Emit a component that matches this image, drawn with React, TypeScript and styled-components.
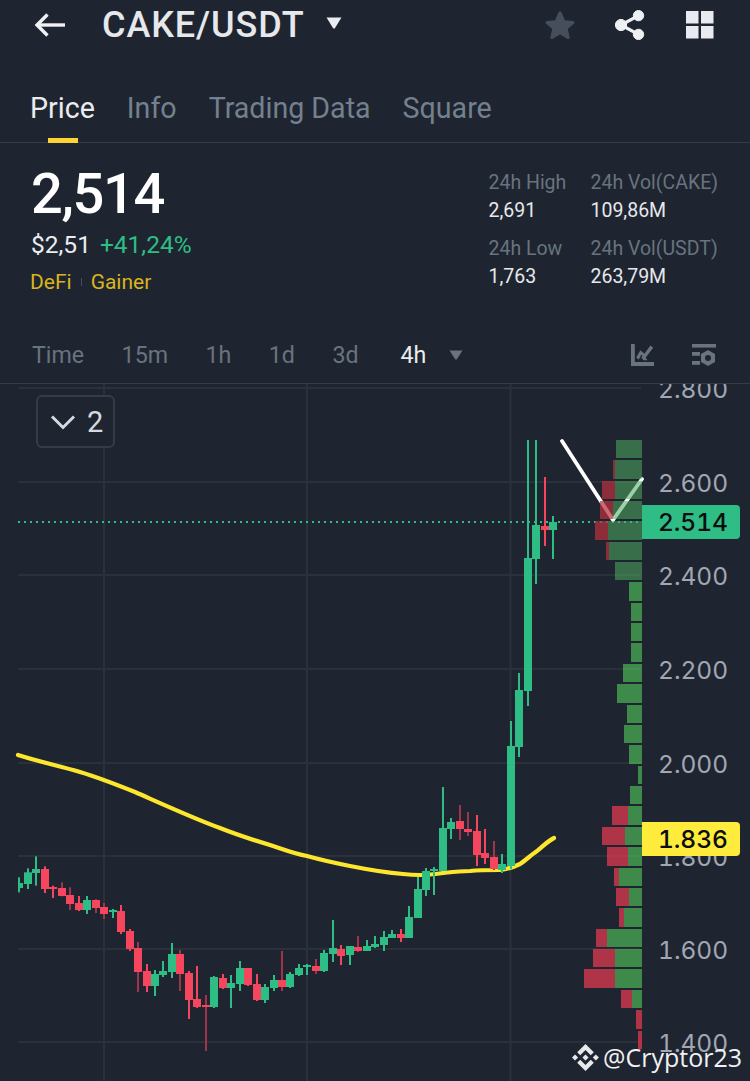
import React from "react"
import styled, { createGlobalStyle } from "styled-components"

const GREEN = "#2ebd85"
const RED = "#f6465d"
const UI_FONT = `Roboto, "Liberation Sans", sans-serif`

type Candle = [number, number, number, number, number, "g" | "r", boolean?]

// measured as [x, wickTop, wickBottom, bodyTop, bodyBottom] at 3x from the left of the chart
const leftCandles: Candle[] = [
  [57, 115, 160, 132, 147, "g"],
  [84, 88, 150, 100, 135, "g"],
  [108, 52, 140, 90, 102, "g"],
  [135, 82, 162, 90, 150, "r"],
  [159, 140, 177, 144, 150, "r"],
  [186, 130, 172, 147, 171, "r", true],
  [210, 145, 213, 168, 195, "r", true],
  [237, 171, 216, 192, 213, "r"],
  [261, 171, 225, 183, 213, "g"],
  [288, 180, 222, 183, 207, "r", true],
  [312, 192, 240, 204, 225, "r", true],
  [339, 210, 237, 213, 219, "g"],
  [363, 198, 285, 216, 279, "r"],
  [390, 270, 336, 276, 330, "r"],
  [414, 309, 459, 327, 399, "r", true],
  [441, 375, 459, 396, 441, "r"],
  [465, 393, 471, 405, 441, "g"],
  [489, 366, 414, 396, 408, "g"],
  [516, 312, 417, 345, 399, "g"],
  [540, 333, 456, 345, 405, "r", true],
  [567, 396, 540, 402, 483, "r"],
  [591, 381, 507, 480, 504, "r"],
  [618, 468, 636, 498, 504, "r", true],
  [642, 411, 507, 414, 504, "g"],
  [669, 405, 450, 417, 447, "r"],
  [693, 408, 507, 432, 447, "g"],
  [720, 366, 456, 387, 435, "g"],
  [744, 387, 441, 387, 438, "r"],
  [771, 405, 486, 435, 483, "r"],
  [795, 435, 492, 444, 483, "g"],
]

const middleCandles: Candle[] = [
  [12, 618, 666, 633, 657, "g"],
  [36, 546, 666, 633, 654, "r", true],
  [60, 609, 657, 615, 654, "g"],
  [87, 585, 621, 597, 618, "g"],
  [111, 585, 618, 588, 594, "g"],
  [138, 570, 615, 591, 606, "r", true],
  [162, 543, 609, 552, 606, "g"],
  [189, 453, 579, 537, 555, "g"],
  [213, 528, 588, 540, 561, "r"],
  [240, 531, 588, 531, 558, "g"],
  [264, 501, 549, 534, 546, "r", true],
  [291, 513, 546, 531, 546, "g"],
  [315, 501, 537, 525, 534, "g"],
  [342, 486, 546, 504, 528, "g"],
  [366, 483, 507, 495, 507, "g"],
  [393, 480, 519, 495, 507, "r"],
  [417, 411, 507, 444, 507, "g"],
  [444, 324, 447, 360, 447, "g"],
  [468, 297, 381, 306, 363, "g"],
  [492, 294, 378, 300, 306, "g"],
  [519, 54, 306, 177, 306, "g"],
  [543, 147, 210, 159, 180, "g"],
  [570, 108, 213, 156, 180, "r", true],
  [594, 129, 201, 180, 189, "r", true],
  [621, 138, 291, 186, 258, "r"],
  [645, 180, 285, 252, 267, "r"],
  [672, 216, 303, 264, 300, "r", true],
  [696, 255, 312, 285, 303, "g"],
]

const rightCandles: Candle[] = [
  [511, 722, 870, 747, 867, "g"],
  [519, 674, 758, 691, 748, "g"],
  [528, 441, 707, 559, 692, "g"],
  [536, 441, 585, 526, 560, "g"],
  [545, 478, 547, 527, 531, "r"],
  [553, 517, 560, 523, 531, "g"],
]

const candles: Candle[] = [
  ...leftCandles.map(([x, a, b, c, d, k, dim]): Candle => [
    x / 3,
    840 + a / 3,
    840 + b / 3,
    840 + c / 3,
    840 + d / 3,
    k,
    dim,
  ]),
  ...middleCandles.map(([x, a, b, c, d, k, dim]): Candle => [
    270 + x / 3,
    770 + a / 3,
    770 + b / 3,
    770 + c / 3,
    770 + d / 3,
    k,
    dim,
  ]),
  ...rightCandles,
]

// [top, height, greenLeft, redLeft]
const profile: [number, number, number, number?][] = [
  [441, 18, 616],
  [461, 19, 615, 613],
  [482, 18, 615, 602],
  [502, 18, 613, 600],
  [522, 19, 608, 595],
  [543, 18, 609, 606],
  [563, 18, 615],
  [583, 19, 629],
  [604, 18, 631],
  [624, 18, 631],
  [644, 19, 631],
  [665, 18, 623],
  [685, 19, 617],
  [706, 18, 627],
  [726, 18, 624],
  [746, 19, 629],
  [767, 18, 638],
  [787, 18, 630],
  [807, 19, 628, 612],
  [828, 18, 625, 602],
  [848, 19, 628, 607],
  [869, 18, 619, 614],
  [889, 18, 629, 616],
  [909, 19, 624, 619],
  [930, 18, 607, 596],
  [950, 18, 615, 593],
  [970, 19, 615, 584],
  [991, 18, 632, 621],
  [1011, 19, 642, 636],
  [1032, 18, 642, 638],
]

const gridRows = [389, 483, 576, 670, 764, 857, 950, 1043]
const gridColumns = [104, 307, 510.5]
const axisLabels = ["2.800", "2.600", "2.400", "2.200", "2.000", "1.800", "1.600", "1.400"]
const intervals = ["15m", "1h", "1d", "3d"]

const GlobalStyle = createGlobalStyle`
  html, body {
    margin: 0;
    background: #1e2530;
  }
`

const Page = styled.div`
  width: 750px;
  height: 1081px;
  overflow: hidden;
  background: #1e2530;
  font-family: ${UI_FONT};
  color: #eaecef;
  display: flex;
  flex-direction: column;
`

const Header = styled.header`
  height: 50px;
  display: flex;
  align-items: center;
  padding: 0 36px 0 34px;
`

const Title = styled.h1`
  margin: 0 0 0 36px;
  font-size: 36px;
  font-weight: 500;
  letter-spacing: 0.9px;
  color: #e6e8ec;
`

const Caret = styled.svg`
  display: block;
  flex: none;
`

const HeaderIcons = styled.div`
  margin-left: auto;
  display: flex;
  align-items: center;
  gap: 41px;
`

const Tabs = styled.nav`
  height: 93px;
  box-sizing: border-box;
  border-bottom: 1px solid #363c47;
  display: flex;
  align-items: center;
  gap: 32px;
  padding: 23px 0 0 30px;
`

const Tab = styled.div<{ $active?: boolean }>`
  position: relative;
  font-size: 28.6px;
  line-height: 34px;
  font-weight: 400;
  color: ${p => (p.$active ? "#eaecef" : "#75808f")};

  ${p =>
    p.$active &&
    `&::after {
      content: "";
      position: absolute;
      left: 18px;
      bottom: -18px;
      width: 30px;
      height: 5px;
      background: #fcd535;
    }`}
`

const Stats = styled.section`
  height: 186px;
  display: flex;
  justify-content: space-between;
  padding: 18px 32px 0 31px;
  box-sizing: border-box;
`

const PriceBlock = styled.div`
  display: flex;
  flex-direction: column;
`

const LastPrice = styled.div`
  font-size: 56px;
  font-weight: 500;
  letter-spacing: -1.4px;
  line-height: 66px;
  color: #fff;
  margin-bottom: 3px;
`

const FiatRow = styled.div`
  display: flex;
  gap: 9px;
  font-size: 24.5px;
  line-height: 30px;
  color: #eaecef;
`

const Change = styled.span`
  color: ${GREEN};
`

const TagRow = styled.div`
  display: flex;
  align-items: center;
  gap: 9px;
  margin: 9px 0 0 -1px;
  font-size: 21px;
  line-height: 26px;
  color: #d9b41f;
`

const TagDivider = styled.span`
  width: 1px;
  height: 8px;
  background: #474d57;
`

const MarketGrid = styled.div`
  display: grid;
  grid-template-columns: 102px auto;
  align-content: start;
  row-gap: 13px;
  margin-top: 9px;
`

const Metric = styled.div`
  display: flex;
  flex-direction: column;
  gap: 2px;
`

const MetricLabel = styled.span`
  font-size: 19.5px;
  line-height: 26px;
  color: #69737f;
`

const MetricValue = styled.span`
  font-size: 19.5px;
  line-height: 25px;
  color: #e6e8ec;
`

const TimeBar = styled.div`
  height: 55px;
  box-sizing: border-box;
  border-bottom: 1px solid #363c47;
  display: flex;
  align-items: center;
  gap: 37.5px;
  padding: 0 32px 2px;
`

const Interval = styled.span<{ $active?: boolean }>`
  font-size: 23.2px;
  color: ${p => (p.$active ? "#eaecef" : "#69737f")};
  margin-left: ${p => (p.$active ? "4.5px" : "0")};
`

const TimeTools = styled.div`
  margin-left: auto;
  display: flex;
  align-items: center;
  gap: 38px;
  margin-right: 2px;
`

const Chart = styled.div`
  position: relative;
  flex: 1;
  overflow: hidden;
`

const ChartCanvas = styled.svg`
  display: block;
  width: 750px;
  height: 697px;
`

const AxisLabel = styled.span<{ $top: number }>`
  position: absolute;
  left: 658px;
  top: ${p => p.$top}px;
  transform: translateY(-50%);
  font-family: Inter, sans-serif;
  font-size: 24.5px;
  font-variant-numeric: tabular-nums;
  line-height: 30px;
  color: #a2a7b3;
`

const PriceTag = styled.div<{ $top: number; $bg: string }>`
  position: absolute;
  left: 642px;
  top: ${p => p.$top}px;
  width: 98px;
  height: 34px;
  box-sizing: border-box;
  padding-right: 12px;
  border-radius: 0 4px 4px 0;
  background: ${p => p.$bg};
  display: flex;
  align-items: center;
  justify-content: flex-end;
  font-family: Inter, sans-serif;
  font-size: 24.5px;
  font-weight: 500;
  font-variant-numeric: tabular-nums;
  color: #0b0e11;
`

const IndicatorToggle = styled.div`
  position: absolute;
  left: 36px;
  top: 11px;
  width: 79px;
  height: 53px;
  box-sizing: border-box;
  border: 2px solid #363c47;
  border-radius: 6px;
  background: #1e2530;
  display: flex;
  align-items: center;
  gap: 11px;
  padding-left: 12px;
  font-size: 29px;
  color: #d6d9df;
`

const Watermark = styled.div`
  position: absolute;
  right: 8px;
  bottom: 9px;
  display: flex;
  align-items: center;
  gap: 4px;
  font-family: "Open Sans", sans-serif;
  font-size: 25px;
  line-height: 30px;
  color: #f0f1f3;
`

const CandleMarks = () => (
  <g clipPath="url(#plot-left)">
    {candles.map(([x, wickTop, wickBottom, bodyTop, bodyBottom, kind, dim], i) => {
      const color = kind === "g" ? GREEN : RED
      return (
        <g key={i}>
          <rect
            x={x - 1}
            y={wickTop}
            width={2}
            height={wickBottom - wickTop}
            fill={dim ? "#a13448" : color}
          />
          <rect
            x={x - 4}
            y={bodyTop}
            width={8}
            height={Math.max(bodyBottom - bodyTop, 2)}
            fill={color}
          />
        </g>
      )
    })}
  </g>
)

const VolumeProfile = () => (
  <>
    {profile.map(([top, height, greenLeft, redLeft], i) => {
      const upper = i < 7
      return (
        <g key={top}>
          {redLeft !== undefined && (
            <rect
              x={redLeft}
              y={top}
              width={greenLeft - redLeft}
              height={height}
              fill={upper ? "#b8303f" : "#e93a50"}
              opacity={0.72}
            />
          )}
          <rect
            x={greenLeft}
            y={top}
            width={642 - greenLeft}
            height={height}
            fill={upper ? "#51ab60" : "#5ade63"}
            opacity={0.55}
          />
        </g>
      )
    })}
  </>
)

const BinanceMark = () => (
  <svg width="27" height="27" viewBox="0 0 126.61 126.61" fill="#e8e9ec">
    <path d="M38.73 53.2l24.59-24.58 24.6 24.6 14.3-14.31L63.32 0 24.42 38.9l14.31 14.3M0 63.31l14.3-14.31 14.31 14.31-14.31 14.3zM38.73 73.41l24.59 24.59 24.6-24.6 14.31 14.29-38.9 38.91-38.91-38.88-.02-.02 14.33-14.29M97.54 63.31l14.3-14.31 14.3 14.31-14.3 14.3z" />
    <path d="M77.83 63.3L63.32 48.78 52.59 59.51l-1.24 1.23-2.54 2.54 14.51 14.5 14.51-14.47z" />
  </svg>
)

const App = () => {
  const chartTop = 385

  return (
    <Page>
      <GlobalStyle />
      <Header>
        <svg width="32" height="26" viewBox="0 0 32 26" fill="none" stroke="#f0f1f3" strokeWidth="3.4">
          <path d="M31 13H3" />
          <path d="M13.5 2.5L3 13l10.5 10.5" />
        </svg>
        <Title>CAKE/USDT</Title>
        <Caret width="16" height="12" viewBox="0 0 16 12" fill="#eaecef" style={{ marginLeft: 21, marginBottom: 4 }}>
          <path d="M0.5 0.5h15L9 11a1.2 1.2 0 0 1-2 0z" />
        </Caret>
        <HeaderIcons>
          <svg width="30" height="29" viewBox="0 0 30 29" fill="#474e5b" style={{ marginRight: -1 }}>
            <path d="M15 0.5c.9 0 1.3.5 1.7 1.3l3.2 7.5 8 .7c1.6.2 2.1 1.8.9 2.8l-6 5.3 1.8 7.9c.4 1.6-1 2.6-2.4 1.8L15 23.4l-7.2 4.4c-1.4.8-2.8-.2-2.4-1.8l1.8-7.9-6-5.3c-1.2-1-.7-2.6.9-2.8l8-.7 3.2-7.5c.4-.8.8-1.3 1.7-1.3z" />
          </svg>
          <svg width="30" height="30" viewBox="0 0 30 30" fill="#eef0f3" stroke="#eef0f3">
            <circle cx="6" cy="15" r="5.6" />
            <circle cx="23.5" cy="5.6" r="5.2" />
            <circle cx="23.5" cy="24.4" r="5.2" />
            <path d="M6 15L23.5 5.6M6 15l17.5 9.4" strokeWidth="3.2" />
          </svg>
          <svg width="28" height="28" viewBox="0 0 28 28" fill="#e9ebf1">
            <rect x="0" y="0" width="12.5" height="12.5" />
            <rect x="15" y="0" width="12.5" height="12.5" />
            <rect x="0" y="15" width="12.5" height="12.5" />
            <rect x="15" y="15" width="12.5" height="12.5" />
          </svg>
        </HeaderIcons>
      </Header>

      <Tabs>
        <Tab $active>Price</Tab>
        <Tab>Info</Tab>
        <Tab>Trading Data</Tab>
        <Tab>Square</Tab>
      </Tabs>

      <Stats>
        <PriceBlock>
          <LastPrice>2,514</LastPrice>
          <FiatRow>
            $2,51
            <Change>+41,24%</Change>
          </FiatRow>
          <TagRow>
            DeFi
            <TagDivider />
            Gainer
          </TagRow>
        </PriceBlock>
        <MarketGrid>
          <Metric>
            <MetricLabel>24h High</MetricLabel>
            <MetricValue>2,691</MetricValue>
          </Metric>
          <Metric>
            <MetricLabel>24h Vol(CAKE)</MetricLabel>
            <MetricValue>109,86M</MetricValue>
          </Metric>
          <Metric>
            <MetricLabel>24h Low</MetricLabel>
            <MetricValue>1,763</MetricValue>
          </Metric>
          <Metric>
            <MetricLabel>24h Vol(USDT)</MetricLabel>
            <MetricValue>263,79M</MetricValue>
          </Metric>
        </MarketGrid>
      </Stats>

      <TimeBar>
        <Interval>Time</Interval>
        {intervals.map(item => (
          <Interval key={item}>{item}</Interval>
        ))}
        <Interval $active>4h</Interval>
        <Caret width="14" height="10" viewBox="0 0 14 10" fill="#6a7380" style={{ marginLeft: -15 }}>
          <path d="M0.5 0.5h13L8 9a1.2 1.2 0 0 1-2 0z" />
        </Caret>
        <TimeTools>
          <svg width="23" height="22" viewBox="0 0 23 22" fill="#6a7380">
            <path d="M0 0h3.8v18H23v4H0z" />
            <path d="M5.2 13.5L9.4 6.2l4 3.6L19.4 1.6 22.2 3.8l-8 10.4-3.9-3.4-2.6 4.6z" />
            <path d="M10.2 13.6l2.4 2.6h4l-2-2.4-2.6-2.2z" />
          </svg>
          <svg width="24" height="22" viewBox="0 0 24 22" fill="#6a7380">
            <rect x="0" y="0" width="24" height="3.6" />
            <rect x="0" y="8" width="8" height="3.8" />
            <rect x="0" y="17" width="8" height="3.8" />
            <path d="M16 6l7 4v8l-7 4-7-4v-8zm0 5a3 3 0 1 0 0 6 3 3 0 0 0 0-6z" fillRule="evenodd" />
          </svg>
        </TimeTools>
      </TimeBar>

      <Chart>
        <ChartCanvas viewBox={`0 ${chartTop} 750 697`}>
          <defs>
            <clipPath id="plot-left">
              <rect x={18} y={chartTop} width={732} height={697} />
            </clipPath>
          </defs>
          {gridRows.map(y => (
            <rect key={y} x={18} y={y - 1} width={623} height={2} fill="#2a313b" />
          ))}
          {gridColumns.map(x => (
            <rect key={x} x={x - 1} y={chartTop} width={2} height={697} fill="#2a313b" />
          ))}
          <path
            d="M18 756 C40 763 60 767 80 773 C100 779 120 787 135 793 C160 804 195 820 220 829 C240 837 260 843 270 846 C285 851 295 855 307 857 C325 862 340 865 350 867 C370 871 390 874 403 875 C412 876 416 876 420 876 C430 876 436 875 443 874 C452 873 460 872 470 872 C480 871 490 871 500 871 C508 870 514 868 520 865 C526 861 531 856 537 852 C543 847 548 842 554 839"
            fill="none"
            stroke="#fde72e"
            strokeWidth="4.2"
            strokeLinecap="round"
          />
          <CandleMarks />
          <line x1="18" x2="642" y1="523" y2="523" stroke={GREEN} strokeWidth="2" strokeDasharray="2 4" />
          <path d="M562 442L613 521L642 480" fill="none" stroke="#fff" strokeWidth="3.8" strokeLinejoin="round" strokeLinecap="round" />
          <VolumeProfile />
        </ChartCanvas>

        {axisLabels.map((label, i) => (
          <AxisLabel key={label} $top={gridRows[i] - chartTop + 1}>
            {label}
          </AxisLabel>
        ))}
        <PriceTag $top={506 - chartTop} $bg={GREEN}>2.514</PriceTag>
        <PriceTag $top={823 - chartTop} $bg="#ffeb3b">1.836</PriceTag>

        <IndicatorToggle>
          <svg width="26" height="16" viewBox="0 0 26 16" fill="none" stroke="#d6d9df" strokeWidth="3">
            <path d="M2 2.5L13 13.5 24 2.5" />
          </svg>
          2
        </IndicatorToggle>

        <Watermark>
          <BinanceMark />
          @Cryptor23
        </Watermark>
      </Chart>
    </Page>
  )
}

export default App
